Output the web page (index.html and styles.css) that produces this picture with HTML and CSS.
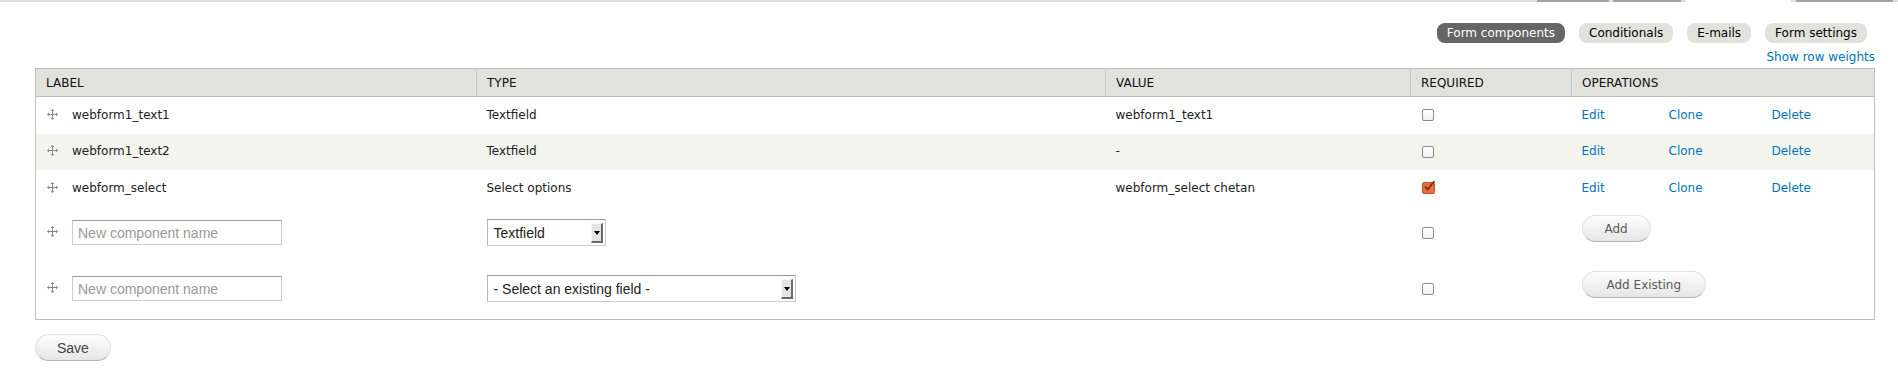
FILE: index.html
```html
<!DOCTYPE html>
<html lang="en">
<head>
    <title>Webform components</title>
    <meta name="viewport" content="width=device-width, initial-scale=1">
    <link rel="stylesheet" href="styles.css">
</head>
<body>
    <div class="strip">
        <span class="strip-fill"></span>
        <span class="seg dark w72"></span>
        <span class="seg w4"></span>
        <span class="seg dark w68"></span>
        <span class="seg w5"></span>
        <span class="seg white w105"></span>
        <span class="seg w5"></span>
        <span class="seg dark w97"></span>
        <span class="seg w5"></span>
    </div>
    <div class="page">
        <ul class="tabs">
            <li><a class="tab active" href="#">Form components</a></li>
            <li><a class="tab" href="#">Conditionals</a></li>
            <li><a class="tab" href="#">E-mails</a></li>
            <li><a class="tab" href="#">Form settings</a></li>
        </ul>
        <div class="weights"><a href="#">Show row weights</a></div>

        <table class="components">
            <colgroup>
                <col class="c-label">
                <col class="c-type">
                <col class="c-value">
                <col class="c-req">
                <col class="c-edit">
                <col class="c-clone">
                <col>
            </colgroup>
            <thead>
                <tr>
                    <th>Label</th>
                    <th>Type</th>
                    <th>Value</th>
                    <th>Required</th>
                    <th colspan="3">Operations</th>
                </tr>
            </thead>
            <tbody>
                <tr class="r1">
                    <td><span class="handle"><svg width="11" height="11" viewBox="0 0 11 11"><path d="M5.5 1v9M1 5.5h9" stroke="#8a8a8a" stroke-width="1"/><path d="M5.5 0l2 2h-4zM5.5 11l2-2h-4zM0 5.5l2-2v4zM11 5.5l-2-2v4z" fill="#8a8a8a"/></svg></span>webform1_text1</td>
                    <td>Textfield</td>
                    <td>webform1_text1</td>
                    <td><span class="check"></span></td>
                    <td><a href="#">Edit</a></td>
                    <td><a href="#">Clone</a></td>
                    <td><a href="#">Delete</a></td>
                </tr>
                <tr class="r2 even">
                    <td><span class="handle"><svg width="11" height="11" viewBox="0 0 11 11"><path d="M5.5 1v9M1 5.5h9" stroke="#8a8a8a" stroke-width="1"/><path d="M5.5 0l2 2h-4zM5.5 11l2-2h-4zM0 5.5l2-2v4zM11 5.5l-2-2v4z" fill="#8a8a8a"/></svg></span>webform1_text2</td>
                    <td>Textfield</td>
                    <td>-</td>
                    <td><span class="check"></span></td>
                    <td><a href="#">Edit</a></td>
                    <td><a href="#">Clone</a></td>
                    <td><a href="#">Delete</a></td>
                </tr>
                <tr class="r3">
                    <td><span class="handle"><svg width="11" height="11" viewBox="0 0 11 11"><path d="M5.5 1v9M1 5.5h9" stroke="#8a8a8a" stroke-width="1"/><path d="M5.5 0l2 2h-4zM5.5 11l2-2h-4zM0 5.5l2-2v4zM11 5.5l-2-2v4z" fill="#8a8a8a"/></svg></span>webform_select</td>
                    <td>Select options</td>
                    <td>webform_select chetan</td>
                    <td><span class="check checked"><svg width="15" height="14" viewBox="0 0 15 14"><path d="M3 6.5l2.6 3L12.5 1" fill="none" stroke="#6b2c12" stroke-width="1.6"/></svg></span></td>
                    <td><a href="#">Edit</a></td>
                    <td><a href="#">Clone</a></td>
                    <td><a href="#">Delete</a></td>
                </tr>
                <tr class="r4">
                    <td><span class="handle"><svg width="11" height="11" viewBox="0 0 11 11"><path d="M5.5 1v9M1 5.5h9" stroke="#8a8a8a" stroke-width="1"/><path d="M5.5 0l2 2h-4zM5.5 11l2-2h-4zM0 5.5l2-2v4zM11 5.5l-2-2v4z" fill="#8a8a8a"/></svg></span><input class="text" type="text" placeholder="New component name"></td>
                    <td><span class="select short"><span class="select-text">Textfield</span><span class="select-btn"></span></span></td>
                    <td></td>
                    <td><span class="check"></span></td>
                    <td colspan="3"><button class="btn">Add</button></td>
                </tr>
                <tr class="r5">
                    <td><span class="handle"><svg width="11" height="11" viewBox="0 0 11 11"><path d="M5.5 1v9M1 5.5h9" stroke="#8a8a8a" stroke-width="1"/><path d="M5.5 0l2 2h-4zM5.5 11l2-2h-4zM0 5.5l2-2v4zM11 5.5l-2-2v4z" fill="#8a8a8a"/></svg></span><input class="text" type="text" placeholder="New component name"></td>
                    <td><span class="select long"><span class="select-text">- Select an existing field -</span><span class="select-btn"></span></span></td>
                    <td></td>
                    <td><span class="check"></span></td>
                    <td colspan="3"><button class="btn wide">Add Existing</button></td>
                </tr>
            </tbody>
        </table>

        <button class="btn save">Save</button>
    </div>
</body>
</html>
```

FILE: styles.css
```css
html, body {
    margin: 0;
    padding: 0;
    background: #fff;
}
body {
    font-family: "DejaVu Sans", Verdana, sans-serif;
    font-size: 12px;
    color: #222;
}
a {
    color: #0074bd;
    text-decoration: none;
}

/* thin bar left over from the primary tabs */
.strip {
    display: flex;
    height: 2px;
    background: #dfded7;
}
.strip-fill {
    flex: 1;
}
.seg {
    display: block;
    height: 2px;
}
.seg.dark { background: #a3a39c; }
.seg.white { background: #fff; }
.w4 { width: 4px; }
.w5 { width: 5px; }
.w68 { width: 68px; }
.w72 { width: 72px; }
.w97 { width: 97px; }
.w105 { width: 105px; }

.page {
    padding: 0 23px 0 35px;
}

.tabs {
    display: flex;
    justify-content: flex-end;
    gap: 14px;
    list-style: none;
    margin: 21px 8px 0 0;
    padding: 0;
}
.tab {
    display: block;
    height: 20px;
    line-height: 20px;
    padding: 0 10px;
    border-radius: 8px;
    background: #e1e2dc;
    color: #000;
}
.tab.active {
    background: #666;
    color: #fff;
}

.weights {
    text-align: right;
    line-height: 14px;
    margin: 7px 0 4px;
}

.components {
    width: 100%;
    border-collapse: collapse;
    table-layout: fixed;
    border: 1px solid #bebfb9;
}
.c-label { width: 441px; }
.c-type { width: 629px; }
.c-value { width: 305px; }
.c-req { width: 161px; }
.c-edit { width: 87px; }
.c-clone { width: 103px; }

.components th {
    height: 27px;
    padding: 0 10px;
    background: #e1e2dc;
    border-bottom: 1px solid #bebfb9;
    border-left: 1px solid #c9cac4;
    text-align: left;
    text-transform: uppercase;
    font-weight: normal;
    color: #111;
}
.components th:first-child {
    border-left: 0;
}
.components td {
    padding: 0 10px;
    vertical-align: middle;
    white-space: nowrap;
}
.components tr.even td {
    background: #f3f4ee;
}
.r1 td, .r2 td, .r3 td {
    padding-bottom: 2px;
}
.r1 td { height: 35px; }
.r2 td { height: 34px; }
.r3 td { height: 35px; }
.r4 td { height: 51px; }
.r5 td { height: 61px; }

.handle {
    display: inline-block;
    width: 11px;
    height: 11px;
    margin: 0 14px 0 1px;
    vertical-align: middle;
    position: relative;
    top: -1px;
}
.handle svg {
    display: block;
}

.text {
    box-sizing: border-box;
    width: 210px;
    height: 25px;
    padding: 0 5px;
    border: 1px solid #ccc;
    border-top-color: #999;
    font-family: "Liberation Sans", Arial, sans-serif;
    font-size: 14px;
    vertical-align: middle;
}
.text::placeholder {
    color: #999;
}

.select {
    box-sizing: border-box;
    display: inline-flex;
    align-items: center;
    height: 27px;
    padding: 0 2px 0 6px;
    border: 1px solid #ccc;
    border-top-color: #9a9a9a;
    border-left-color: #b5b5b5;
    font-family: "Liberation Sans", Arial, sans-serif;
    font-size: 14px;
    color: #222;
    vertical-align: middle;
}
.select.short { width: 119px; }
.select.long { width: 309px; }
.select-text {
    flex: 1;
}
.select-btn {
    box-sizing: border-box;
    position: relative;
    width: 12px;
    height: 20px;
    background: #e4e4e4;
    border-top: 1px solid #f6f6f6;
    border-left: 1px solid #f6f6f6;
    border-right: 2px solid #6a6a6a;
    border-bottom: 2px solid #6a6a6a;
}
.select-btn::after {
    content: "";
    position: absolute;
    left: 2px;
    top: 7px;
    border-left: 3px solid transparent;
    border-right: 3px solid transparent;
    border-top: 4px solid #000;
}

.check {
    box-sizing: border-box;
    display: inline-block;
    width: 12px;
    height: 12px;
    border: 1px solid #8c8c8c;
    border-radius: 2px;
    background: linear-gradient(#fff, #f1f1f1);
    vertical-align: middle;
    margin-left: 1px;
    position: relative;
}
.check.checked {
    width: 13px;
    height: 12px;
    background: #e8703f;
    border-color: #c0582e;
}
.check.checked svg {
    position: absolute;
    left: -1px;
    top: -3px;
}

.btn {
    box-sizing: border-box;
    height: 27px;
    padding: 0 22px;
    border: 1px solid #e0e0e0;
    border-bottom-color: #b4b4b4;
    border-radius: 14px;
    background: linear-gradient(#fdfdfd, #e6e6e6);
    color: #5a5a5a;
    font-family: "DejaVu Sans", Verdana, sans-serif;
    font-size: 12px;
    vertical-align: middle;
    margin-bottom: 8px;
}
.btn.wide {
    padding: 0 24px;
}
.btn.save {
    margin: 14px 0 0;
    padding: 0 21px;
    font-family: "Liberation Sans", Arial, sans-serif;
    font-size: 14px;
    color: #444;
}
```
